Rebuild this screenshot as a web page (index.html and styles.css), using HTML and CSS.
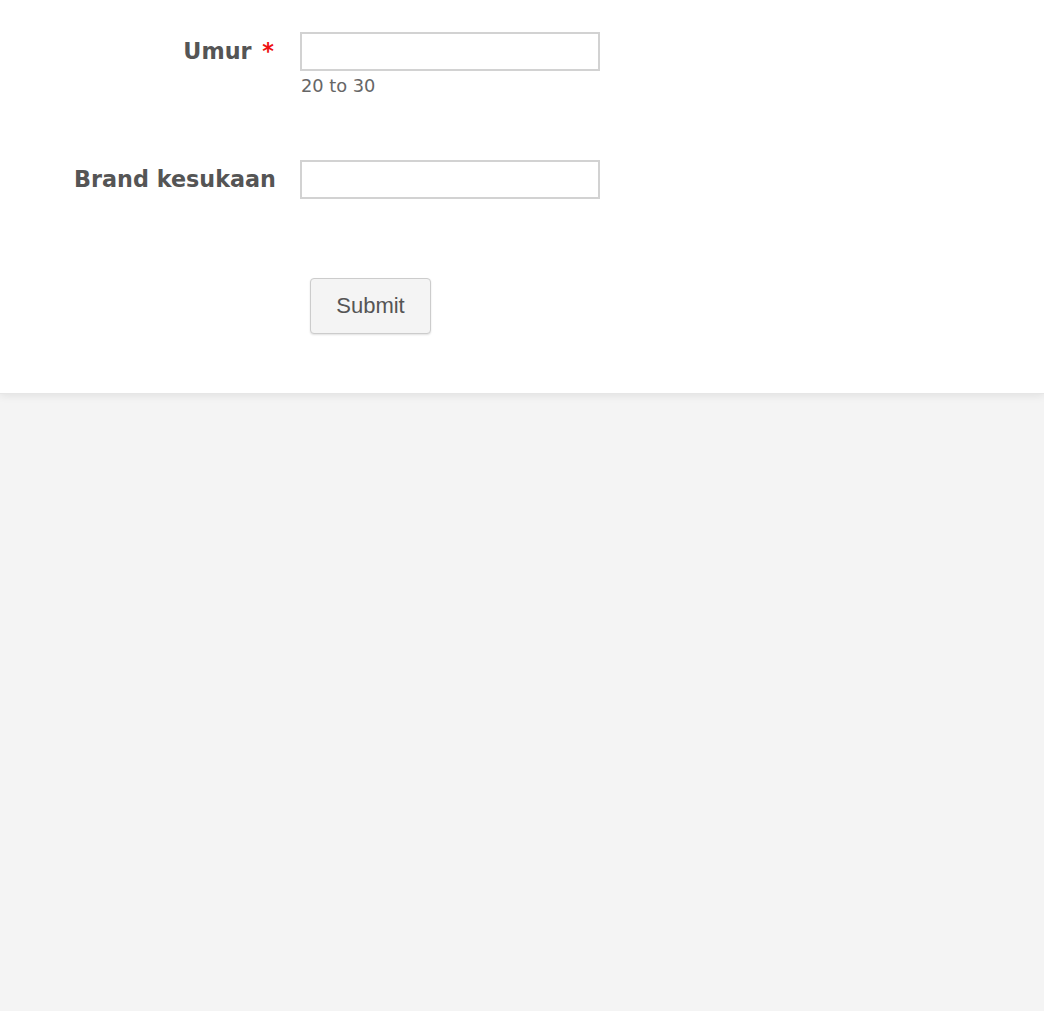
FILE: index.html
```html
<!DOCTYPE html>
<html>
<head>
<meta charset="utf-8">
<link rel="stylesheet" href="styles.css">
</head>
<body>
<div class="panel">
  <form class="form">
    <div class="row">
      <label class="label">Umur <span class="req">*</span></label>
      <div class="field">
        <input class="input" type="text">
        <div class="hint">20 to 30</div>
      </div>
    </div>
    <div class="row row-second">
      <label class="label">Brand kesukaan</label>
      <div class="field">
        <input class="input" type="text">
      </div>
    </div>
    <div class="actions">
      <button class="submit" type="button">Submit</button>
    </div>
  </form>
</div>
</body>
</html>
```
FILE: styles.css
```css
html, body {
  margin: 0;
  padding: 0;
  background: #f4f4f4;
  height: 100%;
}
.panel {
  background: #ffffff;
  height: 394px;
  box-sizing: border-box;
  box-shadow: 0 2px 8px rgba(0, 0, 0, 0.08);
  border-bottom: 1px solid #e6e6e6;
}
.form {
  padding-top: 32px;
  margin: 0;
}
.row {
  display: grid;
  grid-template-columns: 276px 300px;
  column-gap: 24px;
  align-items: start;
}
.row-second {
  margin-top: 63px;
}
.label {
  font-family: "DejaVu Sans", Verdana, sans-serif;
  font-weight: bold;
  font-size: 22.3px;
  color: #555555;
  text-align: right;
  line-height: 39px;
  height: 39px;
  white-space: nowrap;
}
.req {
  color: #ee1111;
  margin-left: 3px;
  margin-right: 2px;
}
.field {
  display: flex;
  flex-direction: column;
}
.input {
  box-sizing: border-box;
  width: 300px;
  height: 39px;
  margin: 0;
  border: 2px solid #d2d2d2;
  background: #ffffff;
  outline: none;
  padding: 0 8px;
  font-size: 18px;
}
.hint {
  font-family: "DejaVu Sans", Verdana, sans-serif;
  font-size: 17.8px;
  color: #666666;
  margin-top: 4px;
  padding-left: 1px;
  line-height: 22px;
}
.actions {
  margin-top: 79px;
  padding-left: 310px;
}
.submit {
  box-sizing: border-box;
  width: 121px;
  height: 56px;
  background: #f4f4f4;
  border: 1px solid #cccccc;
  border-radius: 4px;
  box-shadow: 0 1px 2px rgba(0, 0, 0, 0.12);
  font-family: "Liberation Sans", Arial, sans-serif;
  font-size: 22px;
  color: #555555;
  padding: 0;
  cursor: pointer;
}
```
